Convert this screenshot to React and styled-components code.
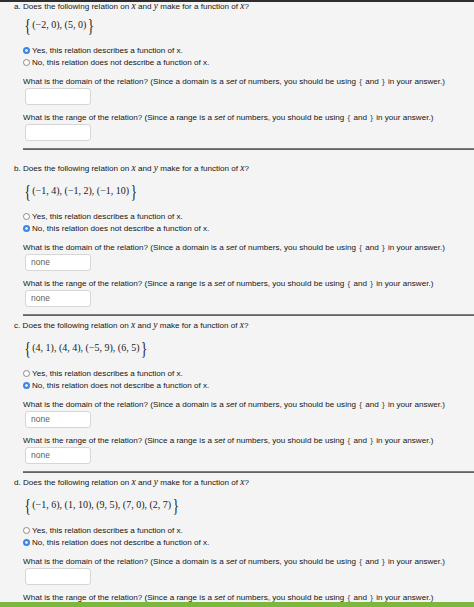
import styled, { createGlobalStyle } from "styled-components";

const GlobalStyle = createGlobalStyle`
  html, body {
    margin: 0;
    padding: 0;
    background: #f4f4f4;
  }
  body {
    font-family: "Liberation Sans", Arial, sans-serif;
    color: #141414;
  }
`;

const questions = [
  {
    letter: "a",
    set: ["(−2, 0)", "(5, 0)"],
    answer: "yes",
    domain: "",
    range: "",
  },
  {
    letter: "b",
    set: ["(−1, 4)", "(−1, 2)", "(−1, 10)"],
    answer: "no",
    domain: "none",
    range: "none",
  },
  {
    letter: "c",
    set: ["(4, 1)", "(4, 4)", "(−5, 9)", "(6, 5)"],
    answer: "no",
    domain: "none",
    range: "none",
  },
  {
    letter: "d",
    set: ["(−1, 6)", "(1, 10)", "(9, 5)", "(7, 0)", "(2, 7)"],
    answer: "no",
    domain: "",
    range: "",
  },
];

function Question({ q, first }) {
  return (
    <Section $first={first}>
      <Header $first={first}>
        {q.letter}. Does the following relation on <Var>x</Var> and <Var>y</Var> make for a function of <Var>x</Var>?
      </Header>
      <Body>
        <SetRow>
          <Brace>{"{"}</Brace>
          <SetText>{q.set.join(", ")}</SetText>
          <Brace>{"}"}</Brace>
        </SetRow>
        <Choices>
          <Choice>
            <Radio $checked={q.answer === "yes"} />
            Yes, this relation describes a function of x.
          </Choice>
          <Choice>
            <Radio $checked={q.answer === "no"} />
            No, this relation does not describe a function of x.
          </Choice>
        </Choices>
        <Prompt>
          What is the domain of the relation? (Since a domain is a <em>set</em> of numbers, you should be using <Curly>{"{"}</Curly> and <Curly>{"}"}</Curly> in your answer.)
        </Prompt>
        <AnswerBox>{q.domain}</AnswerBox>
        <Prompt $tight>
          What is the range of the relation? (Since a range is a <em>set</em> of numbers, you should be using <Curly>{"{"}</Curly> and <Curly>{"}"}</Curly> in your answer.)
        </Prompt>
        <AnswerBox>{q.range}</AnswerBox>
        <Rule $first={first} />
      </Body>
    </Section>
  );
}

export default function App() {
  return (
    <>
      <GlobalStyle />
      <Page>
        {questions.map((q, i) => (
          <Question key={q.letter} q={q} first={i === 0} />
        ))}
      </Page>
      <BottomBar />
    </>
  );
}

const Page = styled.div`
  border-top: 2px solid #2e2e2e;
  height: 605px;
  overflow: hidden;
`;

const Section = styled.section`
  display: flex;
  flex-direction: column;
  padding-left: 14px;
`;

const Header = styled.div`
  font-size: 8.1px;
  height: ${(p) => (p.$first ? "6px" : "10px")};
  line-height: ${(p) => (p.$first ? "6px" : "10px")};
  white-space: nowrap;
`;

const Var = styled.i`
  font-family: "Liberation Serif", "Times New Roman", serif;
  font-size: 9.5px;
  line-height: 1;
`;

const Body = styled.div`
  display: flex;
  flex-direction: column;
  align-items: flex-start;
  padding-left: 9px;
`;

const SetRow = styled.div`
  display: flex;
  align-items: center;
  height: 20px;
  margin-top: 7px;
  font-family: "Liberation Serif", "Times New Roman", serif;
  color: #1a1a1a;
`;

const Brace = styled.span`
  display: inline-block;
  font-size: 13px;
  line-height: 13px;
  transform: scaleY(1.5);
  margin: 0 1.5px;
`;

const SetText = styled.span`
  font-size: 10px;
  line-height: 12px;
`;

const Choices = styled.div`
  display: flex;
  flex-direction: column;
  margin-top: 9px;
`;

const Choice = styled.label`
  display: flex;
  align-items: center;
  gap: 2px;
  height: 12px;
  font-size: 8.1px;
  white-space: nowrap;
`;

const Radio = styled.span`
  box-sizing: border-box;
  width: 7px;
  height: 7px;
  border-radius: 50%;
  border: ${(p) => (p.$checked ? "none" : "0.8px solid #8a8a8a")};
  background: ${(p) =>
    p.$checked
      ? "radial-gradient(circle, #dfeaff 0 1.1px, #3a86e8 1.6px)"
      : "#fff"};
  flex-shrink: 0;
`;

const Prompt = styled.div`
  font-size: 8.1px;
  height: 10px;
  line-height: 10px;
  margin-top: ${(p) => (p.$tight ? "8px" : "9px")};
  white-space: nowrap;
  em {
    font-style: italic;
  }
`;

const Curly = styled.span`
  display: inline-block;
  margin: 0 1px;
  color: #444;
`;

const AnswerBox = styled.div`
  box-sizing: border-box;
  width: 66px;
  height: 17px;
  margin: 1px 0 0 2px;
  padding-left: 5px;
  background: #fff;
  border: 1px solid #d6d6d6;
  border-radius: 3px;
  font-size: 8.5px;
  line-height: 15px;
  color: #5e5e5e;
`;

const Rule = styled.hr`
  align-self: stretch;
  flex-shrink: 0;
  margin: 7px 0 ${(p) => (p.$first ? "14px" : "5px")};
  border: none;
  height: 2px;
  background: linear-gradient(#8a8a8a, #555);
`;

const BottomBar = styled.div`
  position: fixed;
  left: 0;
  right: 0;
  bottom: 0;
  height: 5px;
  background: #7bb83c;
`;
